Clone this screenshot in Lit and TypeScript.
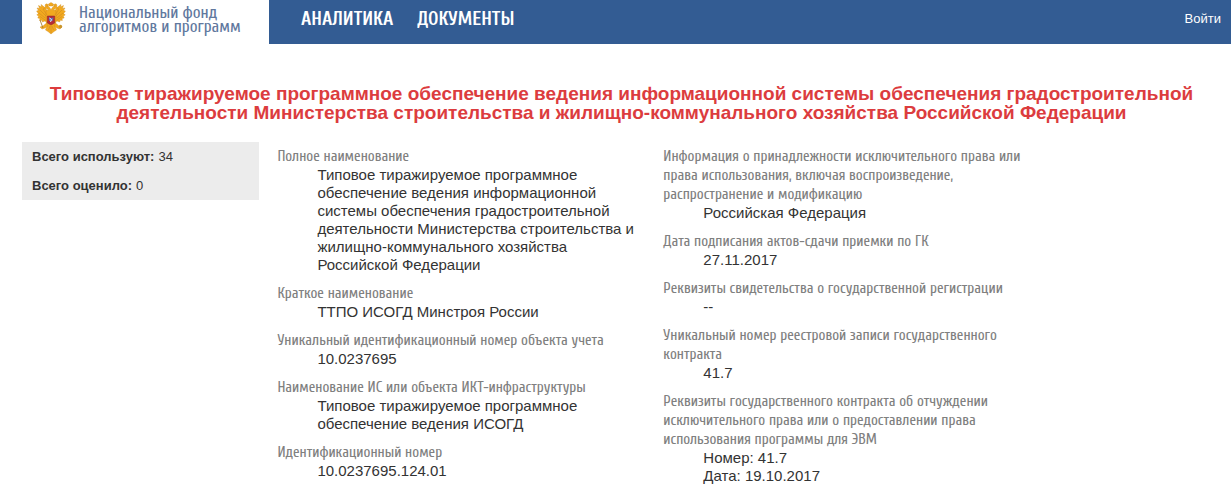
import { LitElement, html, css } from "lit";
import { customElement } from "lit/decorators.js";

interface Field {
  label: string;
  values: string[];
}

const NAMING: Field[] = [
  {
    label: "Полное наименование",
    values: [
      "Типовое тиражируемое программное обеспечение ведения информационной системы обеспечения градостроительной деятельности Министерства строительства и жилищно-коммунального хозяйства Российской Федерации",
    ],
  },
  { label: "Краткое наименование", values: ["ТТПО ИСОГД Минстроя России"] },
  { label: "Уникальный идентификационный номер объекта учета", values: ["10.0237695"] },
  {
    label: "Наименование ИС или объекта ИКТ-инфраструктуры",
    values: ["Типовое тиражируемое программное обеспечение ведения ИСОГД"],
  },
  { label: "Идентификационный номер", values: ["10.0237695.124.01"] },
];

const RIGHTS: Field[] = [
  {
    label:
      "Информация о принадлежности исключительного права или права использования, включая воспроизведение, распространение и модификацию",
    values: ["Российская Федерация"],
  },
  { label: "Дата подписания актов-сдачи приемки по ГК", values: ["27.11.2017"] },
  { label: "Реквизиты свидетельства о государственной регистрации", values: ["--"] },
  { label: "Уникальный номер реестровой записи государственного контракта", values: ["41.7"] },
  {
    label:
      "Реквизиты государственного контракта об отчуждении исключительного права или о предоставлении права использования программы для ЭВМ",
    values: ["Номер: 41.7", "Дата: 19.10.2017"],
  },
];

@customElement("fap-emblem")
export class FapEmblem extends LitElement {
  static styles = css`
    :host { display: block; flex: none; }
    svg { display: block; width: 30px; height: 33px; }
  `;

  render() {
    return html`
      <svg viewBox="0 0 30 33" role="img" aria-label="Герб">
        <g fill="#f2a91f" stroke="#d08a1c" stroke-width=".4" stroke-linejoin="round">
          <path d="M14 11 C11 9 9 5 5 2.500 L5.500 5 L2.500 3.500 L3.600 6.500 L1 6 L2.600 8.500 L.6 9 L2.300 11.500 L.8 13 L2.800 14 L1.800 16 L4 16.400 L3.600 18.400 L6 18.200 L6.300 20 L9 19 L12 21Z"/>
          <path d="M16 11 C19 9 21 5 25 2.500 L24.500 5 L27.500 3.500 L26.400 6.500 L29 6 L27.400 8.500 L29.400 9 L27.700 11.500 L29.200 13 L27.200 14 L28.200 16 L26 16.400 L26.400 18.400 L24 18.200 L23.700 20 L21 19 L18 21Z"/>
          <path d="M10 9 L12.500 8 L10.500 6.500 L7.500 7 L9 4.500 L12 4 L14 6 L15 8 L16 6 L18 4 L21 4.500 L22.500 7 L19.500 6.500 L17.500 8 L20 9 L20 19 L19 24 L20.500 28 L18 29.500 L15 32 L12 29.500 L9.500 28 L11 24 L10 19Z"/>
          <path d="M12.500 2L15 .5L17.500 2L17 4H13Z"/>
          <path d="M9 3.200L10 1.800L12.300 2.600L12 4.200H9.600Z M21 3.200L20 1.800L17.700 2.600L18 4.200H20.400Z"/>
          <path d="M10.500 21L7 24L4 25L6 27L9 26L12 24Z M19.500 21L23 24L26 25L24 27L21 26L18 24Z"/>
        </g>
        <g fill="none" stroke="#c98422" stroke-width=".5">
          <path d="M4 8L10 14M3 11L9 16M4 14.500L9 18M7 7L11 13M26 8L20 14M27 11L21 16M26 14.500L21 18M23 7L19 13"/>
          <path d="M14 24L12.500 28M16 24L17.500 28M15 24V31"/>
        </g>
        <path d="M4 18L7 26" stroke="#a97d2a" stroke-width=".9"/>
        <circle cx="24.500" cy="24.500" r="1.700" fill="#c9952d"/>
        <path d="M11.300 14H18.700V21L15 23L11.300 21Z" fill="#b62c36" stroke="#8f252b" stroke-width=".5"/>
        <path d="M13 15.500L15.500 16L17.500 15.500L16.500 19H13Z" fill="#5e76b8"/>
        <path d="M13.500 16L15.500 17.500L14.500 20" fill="none" stroke="#e8e4ed" stroke-width="1"/>
      </svg>
    `;
  }
}

@customElement("app-root")
export class AppRoot extends LitElement {
  static styles = css`
    :host {
      display: block;
      background: #fff;
      color: #333;
      font-family: "Liberation Sans", Arial, sans-serif;
    }
    a { color: inherit; text-decoration: none; }
    .bar {
      display: flex;
      min-height: 44px;
      padding: 0 10px 0 22px;
      background: #335c93;
      color: #fff;
    }
    .brand {
      display: flex;
      gap: 13px;
      box-sizing: border-box;
      width: 247px;
      padding: 2px 14px 0;
      background: #fff;
      color: #61789e;
      font: 17px/14px Cuprum, "Liberation Sans Narrow", "Liberation Sans", sans-serif;
    }
    .brand-name { padding-top: 4px; white-space: nowrap; }
    .nav {
      display: flex;
      flex: 1;
      gap: 24px;
      padding: 8px 0 0 32px;
      font: bold 19px/22px Cuprum, "Liberation Sans Narrow", "Liberation Sans", sans-serif;
      text-transform: uppercase;
    }
    .login { padding-top: 10px; font-size: 13px; line-height: 18px; }
    .page { padding: 40px 10px 4px 22px; }
    .title {
      margin: 0 0 20px;
      color: #dc3c3e;
      font-size: 19px;
      line-height: 19px;
      text-align: center;
    }
    .content {
      display: grid;
      grid-template-columns: 20% 31% 31%;
      gap: 18px;
      align-items: start;
      margin-right: 12px;
    }
    .stats {
      margin: 0;
      padding: 0 10px;
      background: #ececec;
      font-size: 13px;
      line-height: 29px;
    }
    .stat { display: flex; gap: 4px; }
    .stat dt { font-weight: bold; }
    .stat dd { margin: 0; }
    .fields { display: grid; gap: 10px; margin: 0; padding-top: 5px; }
    .fields dt {
      color: #808080;
      font: 15px/19px Cuprum, "Liberation Sans Narrow", "Liberation Sans", sans-serif;
    }
    .fields dd { margin: 0 0 0 40px; font-size: 15px; line-height: 18px; }
  `;

  private fields(items: Field[]) {
    return html`
      <dl class="fields">
        ${items.map(
          (f) => html`<div><dt>${f.label}</dt>${f.values.map((v) => html`<dd>${v}</dd>`)}</div>`,
        )}
      </dl>
    `;
  }

  render() {
    return html`
      <header class="bar">
        <a class="brand" href="#">
          <fap-emblem></fap-emblem>
          <span class="brand-name">Национальный фонд<br />алгоритмов и программ</span>
        </a>
        <nav class="nav">
          <a href="#analytics">Аналитика</a>
          <a href="#documents">Документы</a>
        </nav>
        <a class="login" href="#login">Войти</a>
      </header>
      <main class="page">
        <h1 class="title">
          Типовое тиражируемое программное обеспечение ведения информационной системы обеспечения
          градостроительной деятельности Министерства строительства и жилищно-коммунального
          хозяйства Российской Федерации
        </h1>
        <div class="content">
          <dl class="stats">
            <div class="stat"><dt>Всего используют:</dt><dd>34</dd></div>
            <div class="stat"><dt>Всего оценило:</dt><dd>0</dd></div>
          </dl>
          ${this.fields(NAMING)} ${this.fields(RIGHTS)}
        </div>
      </main>
    `;
  }
}
